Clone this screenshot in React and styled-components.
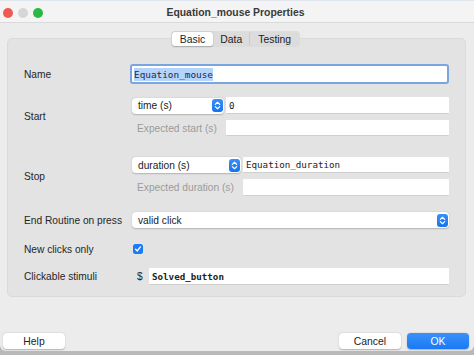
import React from "react";
import styled, { createGlobalStyle } from "styled-components";

const GlobalStyle = createGlobalStyle`
  html, body {
    margin: 0;
    padding: 0;
    background: #b9b9b9;
  }
  body {
    width: 474px;
    height: 355px;
    overflow: hidden;
    font-family: "Liberation Sans", Arial, sans-serif;
    font-size: 10.2px;
    color: #262626;
  }
`;

const Window = styled.div`
  width: 474px;
  height: 351px;
  background: #ececec;
  display: flex;
  flex-direction: column;
  border-bottom-right-radius: 6px;
  border-bottom-left-radius: 6px;
  overflow: hidden;
`;

const TitleBar = styled.div`
  height: 23px;
  flex: none;
  display: flex;
  align-items: center;
  background: #f4f4f4;
  border-top: 1px solid #dfe5ec;
  border-bottom: 1px solid #dadada;
  box-sizing: border-box;
`;

const Lights = styled.div`
  display: flex;
  gap: 5px;
  padding-left: 3px;
  padding-top: 2px;
`;

const Light = styled.span`
  width: 10px;
  height: 10px;
  border-radius: 50%;
  background: ${(p) => p.$color};
`;

const Title = styled.div`
  flex: 1;
  text-align: center;
  font-weight: bold;
  font-size: 10.4px;
  color: #3a3a3a;
  padding-right: 46px;
  padding-top: 2px;
`;

const Body = styled.div`
  flex: 1;
  display: flex;
  flex-direction: column;
  padding: 8px 8px 0 7px;
`;

const TabBar = styled.div`
  align-self: center;
  display: flex;
  align-items: center;
  height: 16px;
  padding: 0 1px;
  background: #dcdcdc;
  border-radius: 4px;
  position: relative;
  z-index: 1;
  margin-left: -2px;
`;

const Tab = styled.div`
  height: 14px;
  display: flex;
  align-items: center;
  padding: ${(p) => p.$pad};
  border-radius: 3px;
  background: ${(p) => (p.$active ? "#ffffff" : "transparent")};
  box-shadow: ${(p) => (p.$active ? "0 0.5px 1.5px rgba(0,0,0,0.25)" : "none")};
  color: #222;
  font-size: 10.4px;
  border-left: ${(p) => (p.$sep ? "1px solid #c9c9c9" : "none")};
`;

const Group = styled.div`
  margin-top: -9px;
  height: 259px;
  box-sizing: border-box;
  background: #e3e3e3;
  border: 1px solid #dadada;
  border-radius: 5px;
  padding: 25px 16px 0 16px;
  display: grid;
  grid-template-columns: 107px 1fr;
  align-content: start;
`;

const Label = styled.div`
  display: flex;
  align-items: center;
  margin-top: ${(p) => p.$mt || 0}px;
  white-space: nowrap;
`;

const Cell = styled.div`
  margin-top: ${(p) => p.$mt || 0}px;
  display: flex;
  flex-direction: column;
  gap: 6px;
`;

const Line = styled.div`
  display: grid;
  grid-template-columns: ${(p) => p.$first}px 1fr;
  gap: 2px;
  align-items: center;
`;

const FocusRing = styled.div`
  height: 20px;
  box-sizing: border-box;
  border: 2.5px solid #7ba5df;
  border-radius: 3px;
  background: #fff;
  display: flex;
  align-items: center;
  padding-left: 2px;
  margin-left: -1px;
`;

const Selected = styled.span`
  background: #b4d4fb;
  color: #1c2a44;
  font-family: "DejaVu Sans Mono", "Liberation Mono", monospace;
  font-size: 9.4px;
  padding: 1px 0;
`;

const Field = styled.div`
  height: ${(p) => p.$h || 17}px;
  box-sizing: border-box;
  background: #fff;
  border-bottom: 1px solid #cfcfcf;
  border-radius: 1px;
  display: flex;
  align-items: center;
  padding-left: 3px;
  font-family: "DejaVu Sans Mono", "Liberation Mono", monospace;
  font-size: 9.2px;
  font-weight: ${(p) => (p.$bold ? "bold" : "normal")};
  color: #222;
`;

const Select = styled.div`
  height: 16px;
  box-sizing: border-box;
  background: #fff;
  border-radius: 4px;
  box-shadow: 0 0.5px 1.5px rgba(0, 0, 0, 0.22);
  display: flex;
  align-items: center;
  justify-content: space-between;
  padding: 0 1px 0 6px;
  margin-left: 1px;
  color: #222;
`;

const Stepper = styled.span`
  width: 11px;
  height: 13px;
  border-radius: 3px;
  background: linear-gradient(#3a8ff8, #1674ee);
  display: flex;
  align-items: center;
  justify-content: center;
`;

const Hint = styled.div`
  color: #9b9b9b;
  padding-left: 6px;
  white-space: nowrap;
`;

const Check = styled.span`
  width: 10px;
  height: 10px;
  margin-left: 2px;
  border-radius: 2.5px;
  background: #1a7cf4;
  display: flex;
  align-items: center;
  justify-content: center;
`;

const CheckRow = styled.div`
  height: 16px;
  display: flex;
  align-items: center;
`;

const Dollar = styled.span`
  padding-left: 6px;
  width: 12px;
  flex: none;
`;

const StimRow = styled.div`
  display: flex;
  align-items: center;
  & > :last-child {
    flex: 1;
  }
`;

const Footer = styled.div`
  margin-top: auto;
  display: flex;
  align-items: center;
  padding: 0 5px 2px 3px;
  margin-left: -7px;
  margin-right: -8px;
`;

const Button = styled.div`
  width: 62px;
  height: 16px;
  border-radius: 4px;
  display: flex;
  align-items: center;
  justify-content: center;
  margin-left: ${(p) => p.$ml || 0}px;
  background: ${(p) => (p.$primary ? "linear-gradient(#3b91fa, #1a7af3)" : "#fff")};
  color: ${(p) => (p.$primary ? "#fff" : "#222")};
  box-shadow: 0 0.5px 1.5px rgba(0, 0, 0, 0.25);
  font-size: 10.4px;
`;

const Updown = () => (
  <svg width="7" height="9" viewBox="0 0 7 9" fill="none">
    <path d="M1.3 3.4 L3.5 1.3 L5.7 3.4" stroke="#fff" strokeWidth="1.2" strokeLinecap="round" strokeLinejoin="round" />
    <path d="M1.3 5.6 L3.5 7.7 L5.7 5.6" stroke="#fff" strokeWidth="1.2" strokeLinecap="round" strokeLinejoin="round" />
  </svg>
);

const Tick = () => (
  <svg width="8" height="8" viewBox="0 0 8 8" fill="none">
    <path d="M1.6 4.2 L3.3 5.9 L6.4 1.9" stroke="#fff" strokeWidth="1.4" strokeLinecap="round" strokeLinejoin="round" />
  </svg>
);

function Dropdown({ children }) {
  return (
    <Select>
      <span>{children}</span>
      <Stepper>
        <Updown />
      </Stepper>
    </Select>
  );
}

export default function App() {
  return (
    <>
      <GlobalStyle />
      <Window>
        <TitleBar>
          <Lights>
            <Light $color="#ee5b53" />
            <Light $color="#d6d6d6" />
            <Light $color="#2db744" />
          </Lights>
          <Title>Equation_mouse Properties</Title>
        </TitleBar>
        <Body>
          <TabBar>
            <Tab $active $pad="0 8px">Basic</Tab>
            <Tab $pad="0 7px">Data</Tab>
            <Tab $sep $pad="0 8px">Testing</Tab>
          </TabBar>
          <Group>
            <Label>Name</Label>
            <Cell>
              <FocusRing>
                <Selected>Equation_mouse</Selected>
              </FocusRing>
            </Cell>

            <Label $mt={13}>Start</Label>
            <Cell $mt={13}>
              <Line $first={93}>
                <Dropdown>time (s)</Dropdown>
                <Field>0</Field>
              </Line>
              <Line $first={93}>
                <Hint>Expected start (s)</Hint>
                <Field $h={16} />
              </Line>
            </Cell>

            <Label $mt={21}>Stop</Label>
            <Cell $mt={21}>
              <Line $first={110}>
                <Dropdown>duration (s)</Dropdown>
                <Field $h={16}>Equation_duration</Field>
              </Line>
              <Line $first={110}>
                <Hint>Expected duration (s)</Hint>
                <Field />
              </Line>
            </Cell>

            <Label $mt={16}>End Routine on press</Label>
            <Cell $mt={16}>
              <Dropdown>valid click</Dropdown>
            </Cell>

            <Label $mt={13}>New clicks only</Label>
            <Cell $mt={13}>
              <CheckRow>
                <Check>
                  <Tick />
                </Check>
              </CheckRow>
            </Cell>

            <Label $mt={11}>Clickable stimuli</Label>
            <Cell $mt={11}>
              <StimRow>
                <Dollar>$</Dollar>
                <Field $bold>Solved_button</Field>
              </StimRow>
            </Cell>
          </Group>
          <Footer>
            <Button>Help</Button>
            <Button $ml={274}>Cancel</Button>
            <Button $primary $ml={6}>OK</Button>
          </Footer>
        </Body>
      </Window>
    </>
  );
}
